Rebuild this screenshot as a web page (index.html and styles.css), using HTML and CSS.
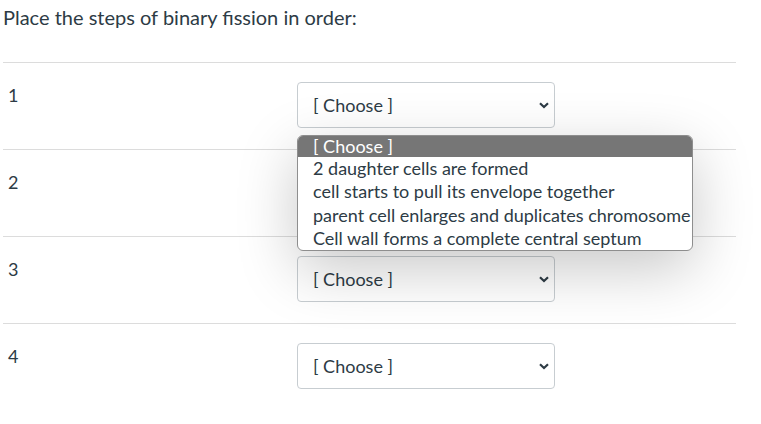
FILE: index.html
```html
<!DOCTYPE html>
<html>
<head>
<meta charset="utf-8">
<link rel="stylesheet" href="styles.css">
</head>
<body>
<div class="question">
  <div class="prompt">Place the steps of binary fission in order:</div>
  <div class="rows">
    <div class="row">
      <div class="num">1</div>
      <div class="select-wrap">
        <div class="select"><span>[ Choose ]</span><svg class="chev" width="10" height="7" viewBox="0 0 10 7"><path d="M1 1.2 L5 5 L9 1.2" fill="none" stroke="#2d3b45" stroke-width="2.2"/></svg></div>
        <div class="menu">
          <div class="opt active">[ Choose ]</div>
          <div class="opt">2 daughter cells are formed</div>
          <div class="opt">cell starts to pull its envelope together</div>
          <div class="opt">parent cell enlarges and duplicates chromosome</div>
          <div class="opt">Cell wall forms a complete central septum</div>
        </div>
      </div>
    </div>
    <div class="row">
      <div class="num">2</div>
      <div class="select-wrap">
        <div class="select"><span>[ Choose ]</span><svg class="chev" width="10" height="7" viewBox="0 0 10 7"><path d="M1 1.2 L5 5 L9 1.2" fill="none" stroke="#2d3b45" stroke-width="2.2"/></svg></div>
      </div>
    </div>
    <div class="row">
      <div class="num">3</div>
      <div class="select-wrap">
        <div class="select"><span>[ Choose ]</span><svg class="chev" width="10" height="7" viewBox="0 0 10 7"><path d="M1 1.2 L5 5 L9 1.2" fill="none" stroke="#2d3b45" stroke-width="2.2"/></svg></div>
      </div>
    </div>
    <div class="row">
      <div class="num">4</div>
      <div class="select-wrap">
        <div class="select"><span>[ Choose ]</span><svg class="chev" width="10" height="7" viewBox="0 0 10 7"><path d="M1 1.2 L5 5 L9 1.2" fill="none" stroke="#2d3b45" stroke-width="2.2"/></svg></div>
      </div>
    </div>
  </div>
</div>
</body>
</html>
```
FILE: styles.css
```css
html, body {
  margin: 0;
  padding: 0;
  background: #fff;
}
body {
  font-family: Lato, "Liberation Sans", sans-serif;
  color: #2d3b45;
}
.question {
  width: 733px;
  padding-left: 3px;
}
.prompt {
  font-size: 20px;
  line-height: 24px;
  padding-top: 5px;
  height: 57px;
}
.rows {
  display: flex;
  flex-direction: column;
}
.row {
  display: flex;
  align-items: flex-start;
  border-top: 1px solid #dcdcdc;
  padding: 19px 0 21px 0;
}
.num {
  width: 294px;
  padding-left: 5px;
  padding-top: 2px;
  box-sizing: border-box;
  font-size: 18px;
  line-height: 22px;
}
.select-wrap {
  position: relative;
}
.select {
  width: 258px;
  height: 46px;
  box-sizing: border-box;
  border: 1px solid #c7cdd1;
  border-radius: 4px;
  background: #fff;
  display: flex;
  align-items: center;
  justify-content: space-between;
  padding: 0 5px 0 15px;
  font-size: 18px;
}
.chev {
  display: block;
}
.menu {
  position: absolute;
  left: 0;
  top: 53px;
  width: 396px;
  box-sizing: border-box;
  border: 1px solid #8e8e8e;
  border-radius: 6px;
  background: #fff;
  overflow: hidden;
  box-shadow: 0 18px 60px rgba(0, 0, 0, 0.22);
  z-index: 5;
  font-size: 18px;
}
.opt {
  line-height: 23.25px;
  padding-left: 15px;
  white-space: nowrap;
}
.opt.active {
  background: #767676;
  color: #fff;
  line-height: 21px;
}
```
